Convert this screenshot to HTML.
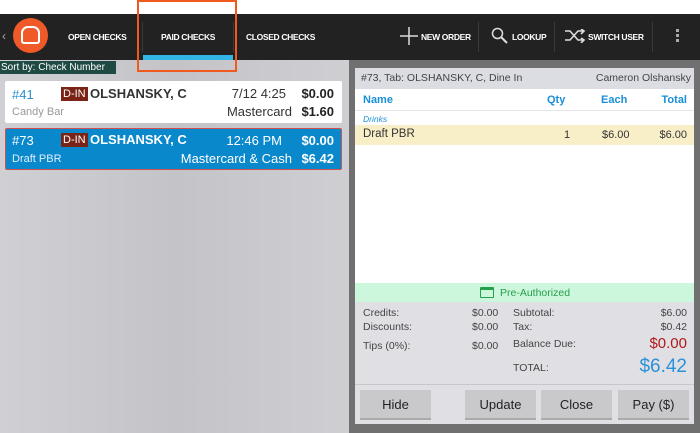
<!DOCTYPE html><html><head><style>
*{margin:0;padding:0;box-sizing:border-box}
body{width:700px;height:433px;overflow:hidden;font-family:"Liberation Sans",sans-serif;background:#fff;position:relative}
.a{position:absolute}
.nav{top:14px;left:0;width:700px;height:46px;background:#222}
.nt{color:#fff;font-size:8.5px;font-weight:bold;top:32px;letter-spacing:-0.35px}
.card{left:5px;width:337px;height:42px;border-radius:2px}
.b{font-weight:bold}
.r{text-align:right}
.btn{top:390px;height:30px;background:#c9c9cc;border-bottom:2px solid #aaa;font-size:13px;color:#222;text-align:center;line-height:29px}
</style></head><body>
<div class="a nav"></div>
<div class="a" style="left:2px;top:29px;color:#aaa;font-size:12px">‹</div>
<div class="a" style="left:13px;top:18px;width:35px;height:35px;border-radius:50%;background:#f05a28"></div>
<div class="a" style="left:21px;top:26px;width:19px;height:18px;border:2.5px solid #fff;border-radius:7px 7px 3px 3px"></div>
<div class="a nt" style="left:68px">OPEN CHECKS</div>
<div class="a" style="left:142px;top:22px;width:1px;height:30px;background:#3a3a3a"></div>
<div class="a nt" style="left:161px">PAID CHECKS</div>
<div class="a" style="left:233px;top:22px;width:1px;height:30px;background:#3a3a3a"></div>
<div class="a nt" style="left:246px">CLOSED CHECKS</div>
<div class="a" style="left:143px;top:55px;width:90px;height:5px;background:#33b5e5"></div>
<svg class="a" style="left:399px;top:26px" width="20" height="20"><path d="M10 1V19M1 10H19" stroke="#ddd" stroke-width="1.5"/></svg>
<div class="a nt" style="left:421px">NEW ORDER</div>
<div class="a" style="left:478px;top:22px;width:1px;height:30px;background:#3a3a3a"></div>
<svg class="a" style="left:491px;top:27px" width="18" height="18"><circle cx="6.5" cy="6.5" r="5" fill="none" stroke="#ddd" stroke-width="1.5"/><path d="M10 10L16 16" stroke="#ddd" stroke-width="2"/></svg>
<div class="a nt" style="left:512px">LOOKUP</div>
<div class="a" style="left:554px;top:22px;width:1px;height:30px;background:#3a3a3a"></div>
<svg class="a" style="left:565px;top:29px" width="22" height="14"><path d="M0 2H5L13 11H19M0 11H5L13 2H19M16 0L19 2L16 5M16 9L19 11L16 14" fill="none" stroke="#ddd" stroke-width="1.6"/></svg>
<div class="a nt" style="left:588px">SWITCH USER</div>
<div class="a" style="left:652px;top:22px;width:1px;height:30px;background:#3a3a3a"></div>
<div class="a" style="left:676px;top:29px;width:3px;height:3px;background:#aaa;box-shadow:0 5px #aaa,0 10px #aaa"></div>
<div class="a" style="left:137px;top:0;width:100px;height:72px;border:2px solid #f05a1e"></div>
<div class="a" style="left:0;top:60px;width:349px;height:373px;background:linear-gradient(90deg,#d0d0d4,#c4c4c8 50%,#cfcfd3);z-index:-1"></div>
<div class="a" style="left:349px;top:60px;width:351px;height:373px;background:#707070;z-index:-1"></div>
<div class="a" style="left:0;top:61px;width:116px;height:13px;background:#1f4a44;color:#fff;font-size:10px;line-height:13px;padding-left:1px">Sort by: Check Number</div>
<div class="a card" style="top:81px;background:#fff"></div>
<div class="a" style="left:12px;top:87px;font-size:13px;color:#2a8fd0">#41</div>
<div class="a" style="left:61px;top:87px;background:#7a2418;color:#fff;font-size:11px;padding:1px 2px">D-IN</div>
<div class="a b" style="left:90px;top:86px;font-size:13px;color:#333">OLSHANSKY, C</div>
<div class="a r" style="right:414px;top:86px;font-size:13px;color:#333">7/12 4:25</div>
<div class="a b r" style="right:366px;top:86px;font-size:13px;color:#222">$0.00</div>
<div class="a" style="left:12px;top:106px;font-size:11px;color:#999">Candy Bar</div>
<div class="a r" style="right:408px;top:104px;font-size:13px;color:#333">Mastercard</div>
<div class="a b r" style="right:366px;top:104px;font-size:13px;color:#222">$1.60</div>
<div class="a card" style="top:128px;background:#0a88cc;border:1px solid #d05050"></div>
<div class="a" style="left:12px;top:133px;font-size:13px;color:#fff">#73</div>
<div class="a" style="left:61px;top:133px;background:#7a2418;color:#fff;font-size:11px;padding:1px 2px">D-IN</div>
<div class="a b" style="left:90px;top:132px;font-size:13px;color:#fff">OLSHANSKY, C</div>
<div class="a r" style="right:418px;top:133px;font-size:13px;color:#fff">12:46 PM</div>
<div class="a b r" style="right:366px;top:133px;font-size:13px;color:#fff">$0.00</div>
<div class="a" style="left:12px;top:153px;font-size:11px;color:#e0f0ff">Draft PBR</div>
<div class="a r" style="right:408px;top:151px;font-size:13px;color:#fff">Mastercard &amp; Cash</div>
<div class="a b r" style="right:366px;top:151px;font-size:13px;color:#fff">$6.42</div>
<div class="a" style="left:355px;top:68px;width:339px;height:356px;background:#fff"></div>
<div class="a" style="left:355px;top:68px;width:339px;height:21px;background:#dcdde2"></div>
<div class="a" style="left:361px;top:72px;font-size:10.5px;color:#444">#73, Tab: OLSHANSKY, C, Dine In</div>
<div class="a r" style="right:9px;top:72px;font-size:10.5px;color:#444">Cameron Olshansky</div>
<div class="a b" style="left:363px;top:94px;font-size:11px;color:#1a8fd8">Name</div>
<div class="a b" style="left:547px;top:94px;font-size:11px;color:#1a8fd8">Qty</div>
<div class="a b" style="left:601px;top:94px;font-size:11px;color:#1a8fd8">Each</div>
<div class="a b r" style="right:13px;top:94px;font-size:11px;color:#1a8fd8">Total</div>
<div class="a" style="left:355px;top:110px;width:339px;height:1px;background:#e6e6e6"></div>
<div class="a" style="left:363px;top:114px;font-size:8.5px;font-style:italic;color:#1a8fd8">Drinks</div>
<div class="a" style="left:355px;top:125px;width:339px;height:20px;background:#f8efc8"></div>
<div class="a" style="left:363px;top:128px;font-size:11.5px;color:#333">Draft PBR</div>
<div class="a" style="left:564px;top:129px;font-size:11px;color:#333">1</div>
<div class="a" style="left:602px;top:129px;font-size:11px;color:#333">$6.00</div>
<div class="a r" style="right:13px;top:129px;font-size:11px;color:#333">$6.00</div>
<div class="a" style="left:355px;top:283px;width:339px;height:19px;background:#cdf7dc"></div>
<div class="a" style="left:480px;top:287px;width:14px;height:11px;border:1.5px solid #22a04a;border-radius:1px;border-top-width:3.5px"></div>
<div class="a" style="left:500px;top:287px;font-size:10.5px;color:#22a04a">Pre-Authorized</div>
<div class="a" style="left:355px;top:302px;width:339px;height:83px;background:#e0e0e4;border-bottom:1px solid #c8c8cc"></div>
<div class="a" style="left:363px;top:306px;font-size:10.5px;color:#444;line-height:14px">Credits:<br>Discounts:</div>
<div class="a" style="left:363px;top:340px;font-size:10.5px;color:#444">Tips (0%):</div>
<div class="a" style="left:472px;top:306px;font-size:10.5px;color:#444;line-height:14px">$0.00<br>$0.00</div>
<div class="a" style="left:472px;top:340px;font-size:10.5px;color:#444">$0.00</div>
<div class="a" style="left:513px;top:306px;font-size:10.5px;color:#444;line-height:14px">Subtotal:<br>Tax:</div>
<div class="a" style="left:513px;top:338px;font-size:10.5px;color:#444">Balance Due:</div>
<div class="a" style="left:513px;top:362px;font-size:10.5px;color:#444">TOTAL:</div>
<div class="a r" style="right:13px;top:306px;font-size:10.5px;color:#444;line-height:14px">$6.00<br>$0.42</div>
<div class="a r" style="right:13px;top:335px;font-size:15px;color:#b01818">$0.00</div>
<div class="a r" style="right:13px;top:356px;font-size:19px;color:#2a92d8">$6.42</div>
<div class="a" style="left:355px;top:385px;width:339px;height:39px;background:#e0e0e4"></div>
<div class="a btn" style="left:360px;width:71px">Hide</div>
<div class="a btn" style="left:465px;width:71px">Update</div>
<div class="a btn" style="left:541px;width:71px">Close</div>
<div class="a btn" style="left:618px;width:71px">Pay ($)</div>
</body></html>
